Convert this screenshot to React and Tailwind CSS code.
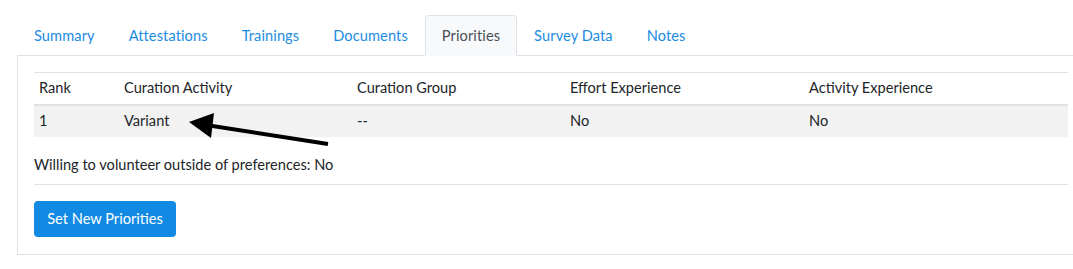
import React from "react";

const tabs = ["Summary", "Attestations", "Trainings", "Documents", "Priorities", "Survey Data", "Notes"];

const cols = [
    { label: "Rank", w: "w-[85px]" },
    { label: "Curation Activity", w: "w-[233px]" },
    { label: "Curation Group", w: "w-[213px]" },
    { label: "Effort Experience", w: "w-[239px]" },
    { label: "Activity Experience", w: "" },
];

const row = ["1", "Variant", "--", "No", "No"];

function Arrow() {
    return (
        <svg className="absolute left-0 top-0 pointer-events-none" width="1073" height="269">
            <line x1="206" y1="125" x2="328" y2="144" stroke="#000" strokeWidth="4" />
            <polygon points="189,122 214,113 211,138" fill="#000" />
        </svg>
    );
}

export default function App() {
    return (
        <div className="relative w-[1073px] h-[269px] overflow-hidden bg-white text-[14.6px] leading-[22.4px] text-[#212529]"
            style={{ fontFamily: "Lato, 'Liberation Sans', sans-serif" }}>
            <div className="w-[1090px] pt-[15px] pl-[17px]">
                {/* Tabs */}
                <div className="flex border-b border-[#dee2e6]">
                    {tabs.map((t) => (
                        <div
                            key={t}
                            className={`px-4 pt-[9px] pb-2 -mb-px border rounded-t tracking-[0.1px] ${t === "Priorities"
                                ? "border-[#dee2e6] border-b-[#f8f9fa] bg-[#f8f9fa] text-[#495057]"
                                : "border-transparent text-[#1b8ce3]"}`}
                        >
                            {t}
                        </div>
                    ))}
                </div>

                {/* Panel */}
                <div className="border-x border-b border-[#dee2e6] px-4 pt-4 pb-4 h-[199px]">
                    <table className="w-[1034px] border-collapse text-left">
                        <thead>
                            <tr className="border-t border-[#dee2e6] border-b-2">
                                {cols.map((c) => (
                                    <th key={c.label} className={`${c.w} font-normal px-[5px] py-[4px] align-middle h-[32px]`}>{c.label}</th>
                                ))}
                            </tr>
                        </thead>
                        <tbody>
                            <tr className="bg-[#f2f2f2]">
                                {row.map((v, i) => (
                                    <td key={i} className="px-[5px] py-[4px] h-[32px]">{v}</td>
                                ))}
                            </tr>
                        </tbody>
                    </table>

                    <div className="mt-[17px]">Willing to volunteer outside of preferences: No</div>

                    <div className="mt-[8px] w-[1034px] border-t border-[#dee2e6]" />

                    <button className="mt-[16px] h-[36px] w-[142px] rounded bg-[#108ae3] text-white text-[14.6px]">
                        Set New Priorities
                    </button>
                </div>
            </div>
            <Arrow />
        </div>
    );
}
